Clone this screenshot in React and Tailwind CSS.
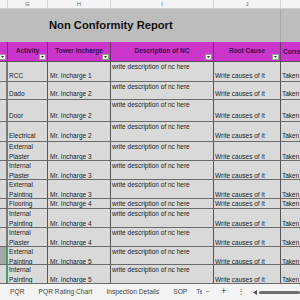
import React from 'react';

const ROWS = [
  { act: ['RCC'], who: 'Mr. Incharge 1', h: 'h-[20px]' },
  { act: ['Dado'], who: 'Mr. Incharge 2', h: 'h-[18px]' },
  { act: ['Door'], who: 'Mr. Incharge 2', h: 'h-[22px]' },
  { act: ['Electrical'], who: 'Mr. Incharge 2', h: 'h-[20px]' },
  { act: ['External', 'Plaster'], who: 'Mr. Incharge 3', h: 'h-[19px]' },
  { act: ['Internal', 'Plaster'], who: 'Mr. Incharge 3', h: 'h-[19px]' },
  { act: ['External', 'Painting'], who: 'Mr. Incharge 3', h: 'h-[19px]' },
  { act: ['Flooring'], who: 'Mr. Incharge 4', h: 'h-[10px]' },
  { act: ['Internal', 'Painting'], who: 'Mr. Incharge 4', h: 'h-[19px]' },
  { act: ['Internal', 'Plaster'], who: 'Mr. Incharge 4', h: 'h-[19px]' },
  { act: ['External', 'Painting'], who: 'Mr. Incharge 5', h: 'h-[18px]', sel: 'dark' },
  { act: ['Internal', 'Painting'], who: 'Mr. Incharge 5', h: 'h-[19px]', sel: 'green' },
];

const COLS = 'grid grid-cols-[8px_40px_63px_103px_67px_1fr]';

function Drop() {
  return (
    <span className="absolute right-[1px] bottom-[1px] w-[7px] h-[6px] bg-[#f4f4f4] border border-[#9a9a9a] flex items-center justify-center">
      <svg width="3" height="2" viewBox="0 0 3 2"><path d="M0 0h3L1.5 2z" fill="#333" /></svg>
    </span>
  );
}

export default function App() {
  return (
    <div className="w-[300px] h-[300px] overflow-hidden bg-white text-[6.5px] leading-[9.5px] text-[#222]" style={{ fontFamily: '"Liberation Sans", Arial, sans-serif' }}>
      {/* column letters */}
      <div className={`${COLS} h-[9px] bg-[#f3f3f3] border-b border-[#cfcfcf] text-[#666] text-[5.5px] leading-[8px]`}>
        <div className="border-r border-[#d4d4d4]"></div>
        <div className="border-r border-[#d4d4d4] text-center">G</div>
        <div className="border-r border-[#d4d4d4] text-center">H</div>
        <div className="border-r border-[#d4d4d4] text-center">I</div>
        <div className="border-r border-[#d4d4d4] text-center">J</div>
        <div></div>
      </div>

      {/* title */}
      <div className={`${COLS} h-[33px] bg-[#bdbdbd]`}>
        <div className="col-span-5 border-r border-[#a8a8a8] flex items-center pl-[49px]">
          <span className="text-[11.2px] font-bold text-[#111] whitespace-nowrap">Non Conformity Report</span>
        </div>
        <div></div>
      </div>

      {/* header */}
      <div className={`${COLS} h-[20px] bg-[#c936c9] border-b border-[#5a4a5a] font-bold text-[#3d0c4e]`}>
        <div className="relative border-r border-[#6a3a6a]"><Drop /></div>
        <div className="relative border-r border-[#6a3a6a] flex items-center justify-center pb-[1px]">Activity<Drop /></div>
        <div className="relative border-r border-[#6a3a6a] flex items-center justify-center pb-[1px]">Tower Incharge<Drop /></div>
        <div className="relative border-r border-[#6a3a6a] flex items-center justify-center pb-[1px]">Description of NC<Drop /></div>
        <div className="relative border-r border-[#6a3a6a] flex items-center justify-center pb-[1px]">Root Cause<Drop /></div>
        <div className="flex items-center pl-[2px] whitespace-nowrap overflow-hidden">Corre</div>
      </div>

      {/* data rows */}
      {ROWS.map((r, i) => (
        <div key={i} className={`${COLS} ${r.h} bg-[#d9d9d9] border-b border-[#6b6b6b] overflow-hidden`}>
          <div className={`border-r-2 ${r.sel ? 'border-[#4f9a6a]' : 'border-[#7a7a7a] border-r'} ${r.sel === 'dark' ? 'bg-[#a6a6a6]' : ''}`}></div>
          <div className="border-r border-[#555] flex flex-col justify-end pl-[1px] pb-[0.5px]">
            {r.act.map(t => <span key={t} className="whitespace-nowrap">{t}</span>)}
          </div>
          <div className="border-r border-[#555] flex items-end pl-[2px] pb-[0.5px] whitespace-nowrap">{r.who}</div>
          <div className="border-r border-[#555] pl-[1px] whitespace-nowrap">write description of nc here</div>
          <div className="border-r border-[#555] flex items-end pl-[1px] pb-[0.5px] whitespace-nowrap">Write causes of it</div>
          <div className="flex items-end pl-[1px] pb-[0.5px] whitespace-nowrap">Taken</div>
        </div>
      ))}

      {/* sheet tabs */}
      <div className="h-[16px] bg-[#f3f3f3] flex items-center text-[6.7px] text-[#444] whitespace-nowrap">
        <span className="ml-[10px]">PQR</span>
        <span className="ml-[14px]">PQR Rating Chart</span>
        <span className="ml-[14px]">Inspection Details</span>
        <span className="ml-[14px]">SOP</span>
        <span className="ml-[9px] w-[6px] overflow-hidden">Te</span>
        <span className="ml-[3px] tracking-[-1px]">···</span>
        <span className="ml-[12px] text-[9px]">+</span>
        <span className="ml-[11px] text-[8px]">⋮</span>
        <div className="ml-[8px] flex-1 flex items-center gap-[2px]">
          <svg width="4" height="5" viewBox="0 0 4 5"><path d="M4 0v5L0 2.5z" fill="#555" /></svg>
          <div className="flex-1 h-[3px] rounded-full bg-[#6e6e6e]"></div>
        </div>
      </div>
    </div>
  );
}
